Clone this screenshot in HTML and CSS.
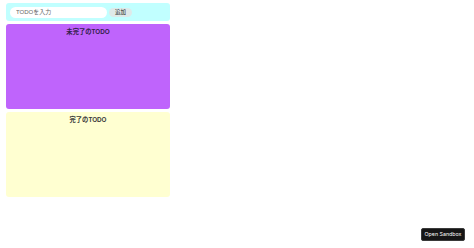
FILE: index.html
```html
<!DOCTYPE html>
<html lang="ja">
<head>
<meta charset="utf-8">
<title>TODO</title>
<link rel="stylesheet" href="styles.css">
</head>
<body>
<div class="input-area">
  <input class="todo-input" placeholder="TODOを入力">
  <button class="add-button">追加</button>
</div>
<div class="area incomplete-area">
  <p class="title">未完了のTODO</p>
  <ul class="list"></ul>
</div>
<div class="area complete-area">
  <p class="title">完了のTODO</p>
  <ul class="list"></ul>
</div>
<a class="sandbox-button">Open Sandbox</a>
</body>
</html>
```
FILE: styles.css
```css
html, body {
  margin: 0;
  padding: 0;
  background: #ffffff;
}
body {
  font-family: "Liberation Sans", "Noto Sans CJK JP", sans-serif;
  width: 474px;
  height: 248px;
  overflow: hidden;
}
.input-area {
  box-sizing: border-box;
  width: 164px;
  height: 18px;
  margin: 3px 0 0 6px;
  padding: 0 4px;
  border-radius: 3px;
  background: #c1ffff;
  display: flex;
  align-items: center;
}
.todo-input {
  box-sizing: border-box;
  width: 97px;
  height: 11px;
  border: none;
  outline: none;
  border-radius: 6px;
  padding: 0 6px;
  background: #ffffff;
  font-family: "Liberation Sans", "Noto Sans CJK JP", sans-serif;
  font-size: 6px;
  color: #333;
}
.todo-input::placeholder {
  color: #666;
}
.add-button {
  box-sizing: border-box;
  height: 9px;
  margin-left: 2px;
  padding: 0 6px;
  border: none;
  border-radius: 5px;
  background: #dfe9e9;
  font-family: "Noto Sans CJK JP", sans-serif;
  font-size: 5.5px;
  line-height: 9px;
  color: #222;
}
.area {
  box-sizing: border-box;
  width: 164px;
  height: 85px;
  margin: 3px 0 0 6px;
  padding: 3px;
  border-radius: 3px;
}
.incomplete-area {
  background: #bf64fc;
}
.complete-area {
  background: #ffffd1;
}
.title {
  margin: 0;
  text-align: center;
  font-weight: bold;
  font-size: 6.3px;
  line-height: 9px;
  color: #3a3a3a;
}
.incomplete-area .title {
  color: #33204a;
}
.list {
  margin: 0;
  padding: 0;
}
.sandbox-button {
  position: fixed;
  left: 421px;
  top: 228px;
  width: 44px;
  height: 13px;
  box-sizing: border-box;
  background: #151515;
  border: 1px solid #3a3a3a;
  border-radius: 2px;
  color: #ffffff;
  font-family: "Inter", "Liberation Sans", sans-serif;
  font-size: 5.3px;
  line-height: 11px;
  text-align: center;
}
```
